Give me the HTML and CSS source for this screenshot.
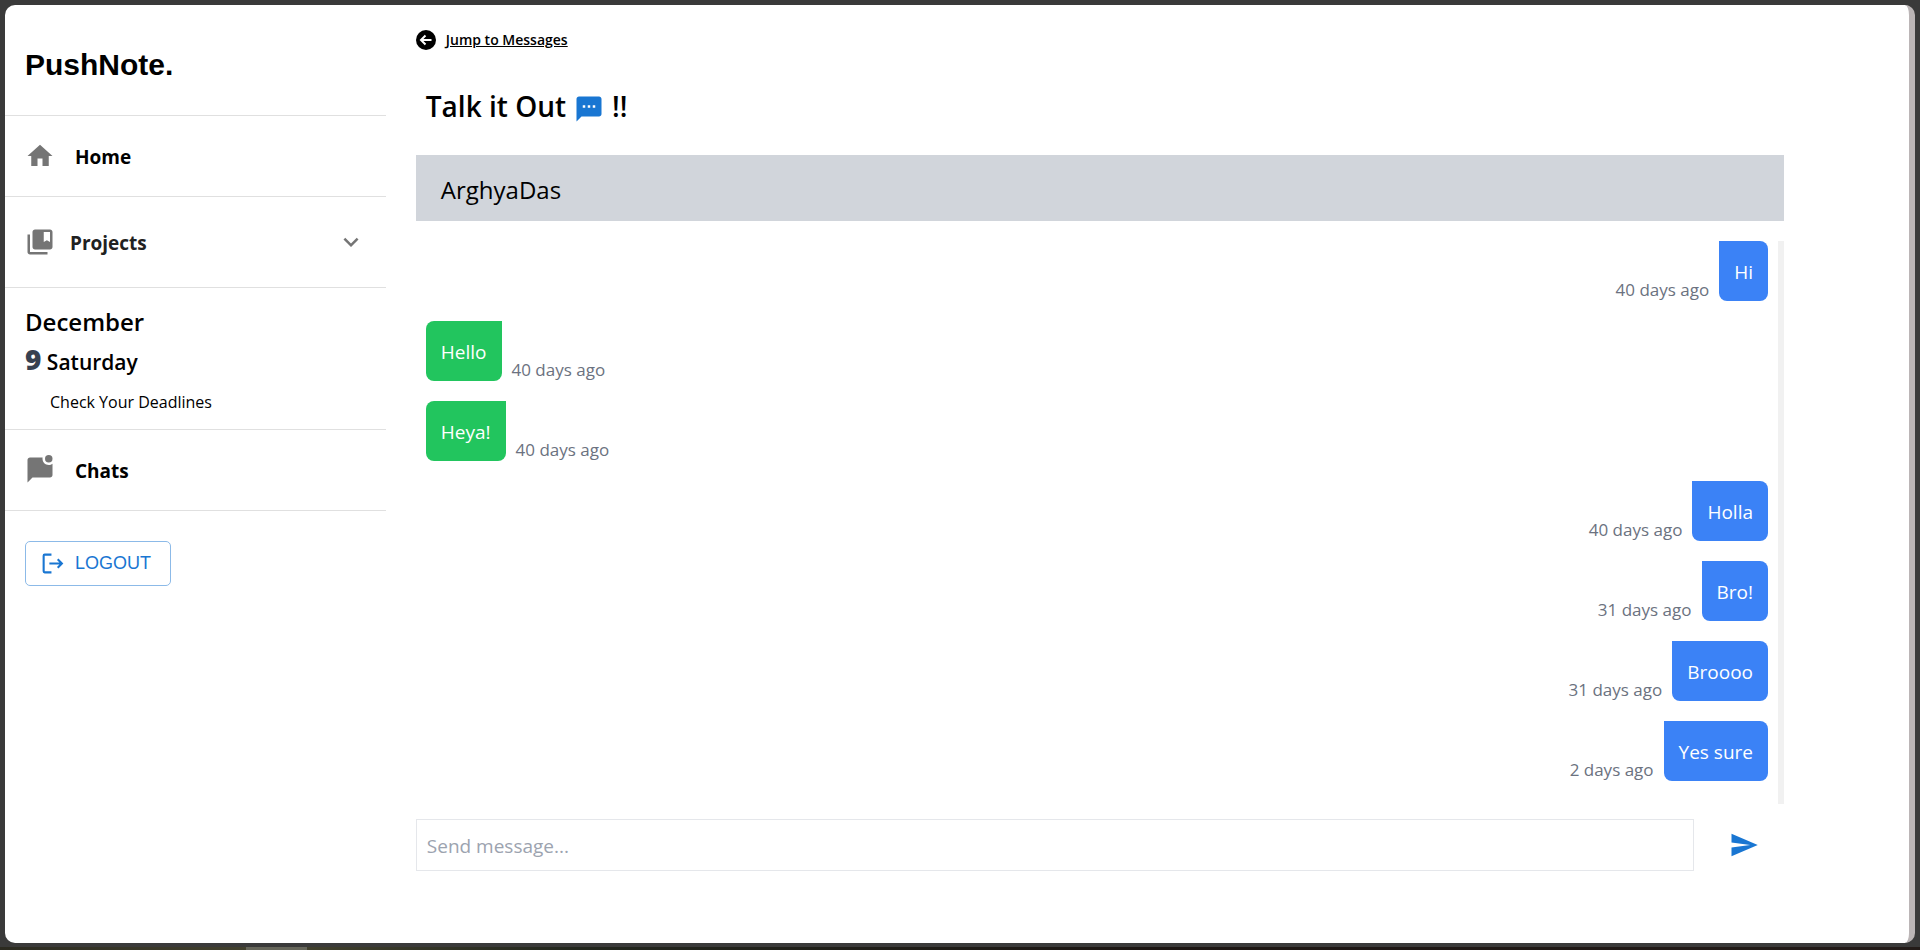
FILE: index.html
```html
<!DOCTYPE html>
<html lang="en">
<head>
    <meta charset="UTF-8">
    <meta name="viewport" content="width=device-width, initial-scale=1.0">
    <title>PushNote</title>
    <link rel="stylesheet" href="styles.css">
</head>
<body>
    <div class="window">
        <aside class="sidebar">
            <div class="brand">PushNote.</div>
            <a class="nav-item" href="#home">
                <svg class="icon" viewBox="0 0 24 24"><path d="M10 20v-6h4v6h5v-8h3L12 3 2 12h3v8z"/></svg>
                <span>Home</span>
            </a>
            <button class="nav-item nav-projects" type="button">
                <svg class="icon" viewBox="0 0 24 24"><path d="M20 2H8c-1.1 0-2 .9-2 2v12c0 1.1.9 2 2 2h12c1.1 0 2-.9 2-2V4c0-1.1-.9-2-2-2zm0 10-2.5-1.5L15 12V4h5v8z"/><path d="M4 6H2v14c0 1.1.9 2 2 2h14v-2H4V6z"/></svg>
                <span>Projects</span>
                <svg class="icon chevron" viewBox="0 0 24 24"><path d="M16.59 8.59 12 13.17 7.41 8.59 6 10l6 6 6-6z"/></svg>
            </button>
            <div class="calendar">
                <div class="month">December</div>
                <div class="day"><strong>9</strong> Saturday</div>
                <div class="deadlines">Check Your Deadlines</div>
            </div>
            <a class="nav-item" href="#chats">
                <svg class="icon" viewBox="0 0 24 24"><path d="M22 6.98V16c0 1.1-.9 2-2 2H6l-4 4V4c0-1.1.9-2 2-2h10.1c-.06.32-.1.66-.1 1 0 2.76 2.24 5 5 5 1.13 0 2.16-.39 3-1.02z"/><circle cx="19" cy="3" r="3"/></svg>
                <span>Chats</span>
            </a>
            <button class="logout" type="button">
                <svg class="logout-icon" viewBox="0 0 24 24"><path d="M11 3.5H4.5a1 1 0 0 0-1 1v15a1 1 0 0 0 1 1H11M9 12h12M17 8l4 4-4 4"/></svg>
                LOGOUT
            </button>
        </aside>

        <main class="main">
            <a class="back" href="#messages">
                <svg class="back-icon" viewBox="0 0 20 20"><circle cx="10" cy="10" r="10"/><path d="M15.5 10H5M9.5 5.5 5 10l4.5 4.5"/></svg>
                <span>Jump to Messages</span>
            </a>
            <h1 class="title">
                Talk it Out
                <svg class="icon" viewBox="0 0 24 24"><path d="M20 2H4c-1.1 0-2 .9-2 2v18l4-4h14c1.1 0 2-.9 2-2V4c0-1.1-.9-2-2-2zM9 11H7V9h2v2zm4 0h-2V9h2v2zm4 0h-2V9h2v2z"/></svg>
                !!
            </h1>
            <div class="chat-header">ArghyaDas</div>

            <div class="messages">
                <div class="message sent">
                    <div class="bubble">Hi</div>
                    <span class="time">40 days ago</span>
                </div>
                <div class="message">
                    <div class="bubble">Hello</div>
                    <span class="time">40 days ago</span>
                </div>
                <div class="message">
                    <div class="bubble">Heya!</div>
                    <span class="time">40 days ago</span>
                </div>
                <div class="message sent">
                    <div class="bubble">Holla</div>
                    <span class="time">40 days ago</span>
                </div>
                <div class="message sent">
                    <div class="bubble">Bro!</div>
                    <span class="time">31 days ago</span>
                </div>
                <div class="message sent">
                    <div class="bubble">Broooo</div>
                    <span class="time">31 days ago</span>
                </div>
                <div class="message sent">
                    <div class="bubble">Yes sure</div>
                    <span class="time">2 days ago</span>
                </div>
            </div>

            <form class="composer">
                <input type="text" placeholder="Send message..." aria-label="Send message">
                <button class="send" type="button" aria-label="Send">
                    <svg class="icon" viewBox="0 0 24 24"><path d="M2.01 21 23 12 2.01 3 2 10l15 2-15 2z"/></svg>
                </button>
            </form>
        </main>
    </div>
    <div class="taskbar"></div>
</body>
</html>
```
FILE: styles.css
```css
* {
    box-sizing: border-box;
}
body {
    margin: 0;
    min-height: 100vh;
    display: flex;
    flex-direction: column;
    background: #3a3a3a;
    color: #000;
    font-family: "Open Sans", "Noto Sans", sans-serif;
}
a {
    color: inherit;
    text-decoration: none;
}
button {
    font-family: inherit;
    background: none;
    border: none;
    cursor: pointer;
}
.window {
    flex: 1;
    display: flex;
    margin: 5px 5px 4px;
    background: #fff;
    border-right: 6px solid #bbb5b6; /* page scrollbar */
    border-radius: 10px;
}
.icon {
    width: 30px;
    height: 30px;
    flex-shrink: 0;
    fill: #757575;
}

/* Sidebar */
.sidebar {
    width: 20%;
    flex-shrink: 0;
}
.brand {
    padding: 40px 20px 30px;
    border-bottom: 1px solid #e0e0e0;
    font-family: "Liberation Sans", sans-serif;
    font-size: 30px;
    font-weight: bold;
    line-height: 40px;
}
.nav-item {
    display: flex;
    align-items: center;
    gap: 20px;
    width: 100%;
    padding: 25px 20px;
    border-bottom: 1px solid #e0e0e0;
    font-size: 19px;
    font-weight: 700;
    line-height: 30px;
}
.nav-item span {
    padding-top: 2px;
    line-height: 28px;
}
.nav-projects {
    gap: 15px;
    padding: 30px 20px;
    color: #212121;
}
.chevron {
    margin-left: auto;
}
.calendar {
    padding: 14px 20px 7px;
    border-bottom: 1px solid #e0e0e0;
    line-height: 40px;
}
.month {
    font-size: 24px;
    font-weight: 600;
}
.day {
    font-size: 21px;
    font-weight: 600;
}
.day strong {
    color: #374151;
    font-size: 28px;
    line-height: 30px;
}
.deadlines {
    padding-left: 25px;
    font-size: 16px;
}
.logout {
    display: flex;
    align-items: center;
    gap: 10px;
    margin: 30px 20px;
    padding: 0 19px 0 14px;
    height: 45px;
    border: 1px solid #8cbae8;
    border-radius: 5px;
    color: #1976d2;
    font-family: "Liberation Sans", sans-serif;
    font-size: 18px;
}
.logout-icon {
    width: 25px;
    height: 25px;
    fill: none;
    stroke: #1976d2;
    stroke-width: 2;
}

/* Chat */
.main {
    flex: 1;
    padding: 23px 125px 0 30px;
}
.back {
    display: flex;
    align-items: center;
    gap: 10px;
    font-size: 14px;
    font-weight: 600;
    line-height: 24px;
    text-decoration: underline;
}
.back-icon {
    width: 20px;
    height: 20px;
}
.back-icon path {
    fill: none;
    stroke: #fff;
    stroke-width: 2;
}
.title {
    display: flex;
    align-items: center;
    gap: 8px;
    margin: 33px 10px 28px;
    font-size: 28px;
    font-weight: 600;
    line-height: 42px;
}
.title .icon {
    margin-top: 6px;
    fill: #1976d2;
}
.chat-header {
    padding: 15px 25px 11px;
    background: #d1d5db;
    font-size: 24px;
    line-height: 40px;
}
.messages {
    display: flex;
    flex-direction: column;
    gap: 20px;
    margin-top: 20px;
    padding: 0 10px 23px;
    border-right: 6px solid #f1f1f1; /* scroll track */
}
.message {
    display: flex;
    align-items: flex-end;
    gap: 10px;
}
.message.sent {
    flex-direction: row-reverse;
}
.bubble {
    padding: 16px 15px 14px;
    background: #22c55e;
    border-radius: 8px 0 8px 8px;
    color: #fff;
    font-size: 19px;
    line-height: 30px;
}
.sent .bubble {
    background: #3b82f6;
    border-radius: 0 8px 8px 8px;
}
.time {
    color: #6b7280;
    font-size: 17px;
    line-height: 22px;
}
.composer {
    display: flex;
    margin-top: 15px;
}
.composer input {
    flex: 1;
    min-width: 0;
    padding: 11px 10px 9px;
    border: 1px solid #e5e7eb;
    font-family: inherit;
    font-size: 19px;
    line-height: 30px;
}
.composer input::placeholder {
    color: #9ca3af;
}
.send {
    display: flex;
    align-items: center;
    padding: 0 25px 0 35px;
}
.send .icon {
    fill: #1976d2;
}

.taskbar {
    height: 3px;
    background: linear-gradient(90deg, transparent 246px, #66665a 246px 307px, transparent 307px),
        linear-gradient(90deg, #2b2a20, #45432f 14%, #22261d 30%, #1c1512 60%, #231b18);
}
```
